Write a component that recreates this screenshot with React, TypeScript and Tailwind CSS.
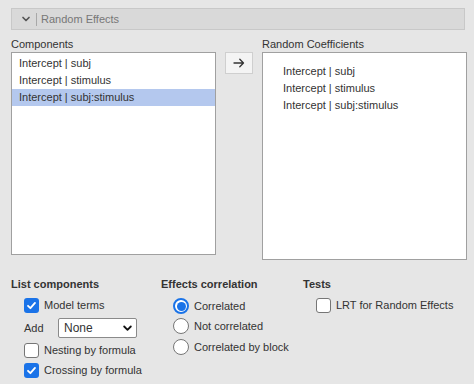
import React from "react";

const font = { fontFamily: '"Liberation Sans", Arial, sans-serif' };

function Check({ checked }: { checked: boolean }) {
  return checked ? (
    <span className="w-[15px] h-[15px] rounded-[3px] bg-[#1a73e8] flex items-center justify-center shrink-0">
      <svg width="11" height="11" viewBox="0 0 12 12">
        <path d="M2.2 6.3 L4.8 8.9 L9.8 3.2" fill="none" stroke="white" strokeWidth="2" strokeLinecap="round" strokeLinejoin="round" />
      </svg>
    </span>
  ) : (
    <span className="w-[15px] h-[15px] rounded-[3px] bg-white border border-[#767676] shrink-0" />
  );
}

function Radio({ checked }: { checked: boolean }) {
  return checked ? (
    <span className="w-[16px] h-[16px] rounded-full border-2 border-[#1a73e8] bg-white flex items-center justify-center shrink-0">
      <span className="w-[9px] h-[9px] rounded-full bg-[#1a73e8]" />
    </span>
  ) : (
    <span className="w-[16px] h-[16px] rounded-full border border-[#767676] bg-white shrink-0" />
  );
}

export default function App() {
  return (
    <div className="w-[474px] h-[384px] bg-[#e6e6e6] text-[11px] text-[#333] overflow-hidden whitespace-nowrap" style={font}>
      <div className="pt-[8px] pl-[11px] pr-[9px]">
        <div className="h-[22px] bg-[#d9d9d9] border border-[#c8c8c8] flex items-center">
          <svg className="ml-[9px]" width="10" height="10" viewBox="0 0 10 10">
            <path d="M2 3.5 L5 6.5 L8 3.5" fill="none" stroke="#555" strokeWidth="1.7" strokeLinecap="round" strokeLinejoin="round" />
          </svg>
          <span className="ml-[5px] w-px h-[13px] bg-[#a8a8a8]" />
          <span className="ml-[4px] text-[#777]">Random Effects</span>
        </div>
      </div>

      <div className="flex pl-[11px] mt-[7px]">
        <div className="w-[205px] shrink-0 flex flex-col">
          <div className="h-[15px] leading-[15px]">Components</div>
          <div className="h-[203px] bg-white border border-[#a0a0a0] pt-[2px]">
            <div className="h-[17px] leading-[17px] pl-[7px]">Intercept | subj</div>
            <div className="h-[17px] leading-[17px] pl-[7px]">Intercept | stimulus</div>
            <div className="h-[17px] leading-[17px] pl-[7px] bg-[#b4c8ee]">Intercept | subj:stimulus</div>
          </div>
        </div>
        <div className="w-[46px] shrink-0 flex pl-[9px] pt-[15px]">
          <div className="w-[28px] h-[22px] bg-[#f4f4f4] border border-[#cfcfcf] flex items-center justify-center">
            <svg width="12" height="10" viewBox="0 0 12 10">
              <path d="M1 5 H10.5 M6.8 1.3 L10.5 5 L6.8 8.7" fill="none" stroke="#333" strokeWidth="1.3" strokeLinecap="round" strokeLinejoin="round" />
            </svg>
          </div>
        </div>
        <div className="w-[205px] shrink-0 flex flex-col">
          <div className="h-[15px] leading-[15px]">Random Coefficients</div>
          <div className="h-[208px] bg-white border border-[#a0a0a0] pt-[10px]">
            <div className="h-[17px] leading-[17px] pl-[20px]">Intercept | subj</div>
            <div className="h-[17px] leading-[17px] pl-[20px]">Intercept | stimulus</div>
            <div className="h-[17px] leading-[17px] pl-[20px]">Intercept | subj:stimulus</div>
          </div>
        </div>
      </div>

      <div className="flex pl-[11px] mt-[16px]">
        <div className="w-[150px] shrink-0 flex flex-col">
          <div className="font-bold h-[16px] leading-[16px]">List components</div>
          <div className="flex items-center gap-[5px] ml-[13px] mt-[6px] h-[15px]">
            <Check checked={true} />
            <span>Model terms</span>
          </div>
          <div className="flex items-center ml-[13px] mt-[5px] h-[20px]">
            <span className="w-[34px]">Add</span>
            <div className="w-[79px] h-[20px] bg-white border border-[#8a8a8a] rounded-[2px] flex items-center justify-between pl-[5px] pr-[4px]">
              <span className="text-[12px]">None</span>
              <svg width="9" height="7" viewBox="0 0 9 7">
                <path d="M1.2 1.5 L4.5 4.8 L7.8 1.5" fill="none" stroke="#111" strokeWidth="1.8" strokeLinecap="round" strokeLinejoin="round" />
              </svg>
            </div>
          </div>
          <div className="flex items-center gap-[5px] ml-[13px] mt-[5px] h-[15px]">
            <Check checked={false} />
            <span>Nesting by formula</span>
          </div>
          <div className="flex items-center gap-[5px] ml-[13px] mt-[5px] h-[15px]">
            <Check checked={true} />
            <span>Crossing by formula</span>
          </div>
        </div>
        <div className="w-[142px] shrink-0 flex flex-col">
          <div className="font-bold h-[16px] leading-[16px]">Effects correlation</div>
          <div className="flex items-center gap-[5px] ml-[12px] mt-[6px] h-[16px]">
            <Radio checked={true} />
            <span>Correlated</span>
          </div>
          <div className="flex items-center gap-[5px] ml-[12px] mt-[4px] h-[16px]">
            <Radio checked={false} />
            <span>Not correlated</span>
          </div>
          <div className="flex items-center gap-[5px] ml-[12px] mt-[5px] h-[16px]">
            <Radio checked={false} />
            <span>Correlated by block</span>
          </div>
        </div>
        <div className="flex flex-col">
          <div className="font-bold h-[16px] leading-[16px]">Tests</div>
          <div className="flex items-center gap-[5px] ml-[13px] mt-[6px] h-[15px]">
            <Check checked={false} />
            <span>LRT for Random Effects</span>
          </div>
        </div>
      </div>
    </div>
  );
}
